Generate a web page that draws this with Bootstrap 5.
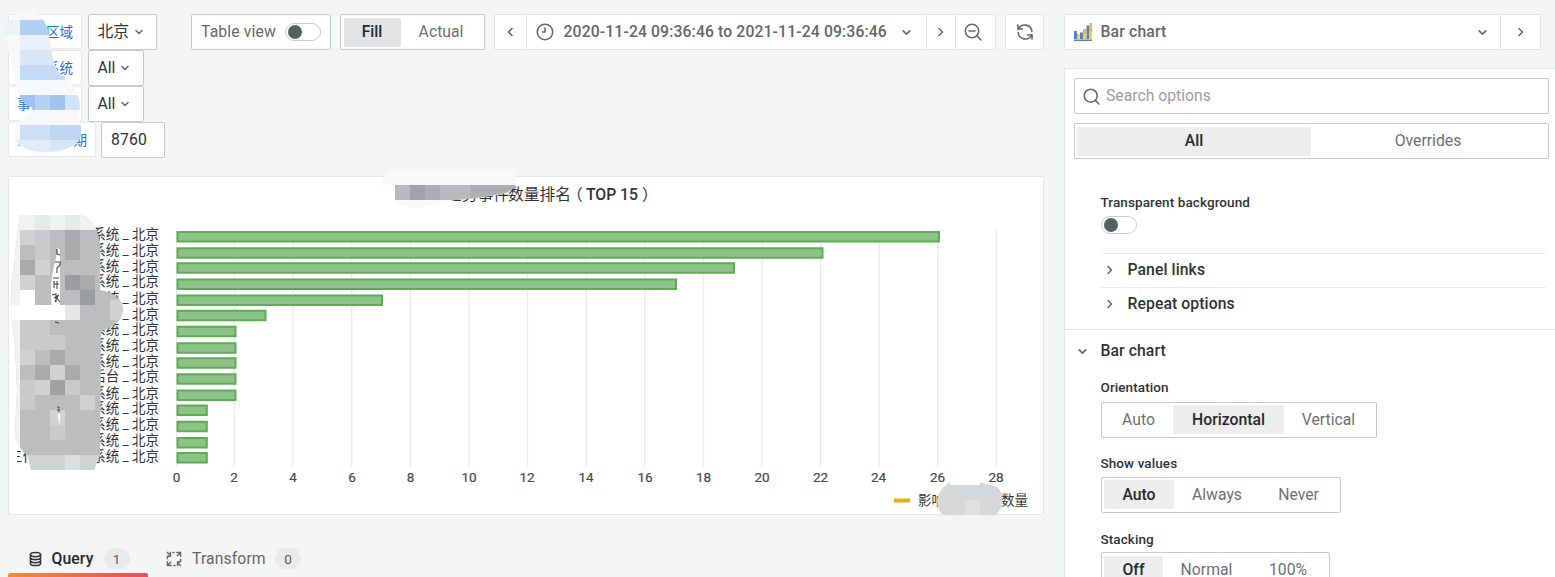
<!DOCTYPE html>
<html lang="en">
<head>
<meta charset="utf-8">
<title>Edit panel</title>
<meta name="viewport" content="width=device-width, initial-scale=1">
<link href="https://cdn.jsdelivr.net/npm/bootstrap@5.3.0/dist/css/bootstrap.min.css" rel="stylesheet">
<style>
body{background:#f4f5f5;color:#2f3338;font-family:Roboto,"Noto Sans CJK SC",sans-serif;font-size:15.75px;line-height:24px;height:577px;overflow:hidden}
svg{display:block;flex:none}
.ico{fill:none;stroke:#66696d;stroke-width:1.6;stroke-linecap:round;stroke-linejoin:round}
.left-col{width:1064px;height:577px;padding:14px 0 0 8px}
.right-col{width:491px;height:577px;padding-top:14px}
.vars{width:183px;position:relative}
.var-row{height:36px}
.var-label{height:35px;width:74px;border:1px solid #e6e7e8;border-radius:2px;background:#fff;color:#1f6fe0;font-size:13.5px;padding-right:8px}
.var-label.wide{width:88px}
.box{height:36px;background:#fff;border:1.5px solid #c6c8ca;border-radius:2px}
.vars .box{padding-left:9px}
.soft{height:36px;background:#fff;border:1px solid #e2e4e5;border-radius:2px}
.soft>*+*{border-left:1px solid #e2e4e5}
.muted{color:#63676b}
.toggle{width:36px;height:18px;border:1.3px solid #c9cbcd;border-radius:10px;background:#fff;padding:0 0 0 2.5px}
.toggle i{width:14px;height:14px;border-radius:50%;background:#5a5e62}
.seg{height:36px;padding:2.5px;background:#fff;border:1.5px solid #c6c8ca;border-radius:2px}
.seg span{height:29px;display:flex;align-items:center;justify-content:center;color:#6c7074;border-radius:2px}
.seg .on{background:#ededee;color:#25292e;font-weight:500}
.med{font-weight:500}
.range{letter-spacing:.12px;margin-left:10px;width:324px;white-space:nowrap}
.panel{width:1036px;height:339px;margin-top:17.5px;background:#fff;border:1px solid #e4e6e7;border-radius:2px}
.side{height:520px;margin-top:18px;background:#fff;border:1px solid #e4e6e7;border-right:0;padding:9px 6px 0 8.5px}
.search{width:475px;color:#9b9ea1}
.indent{padding-left:27px;margin-right:-6px}
.flabel{font-size:13.5px;font-weight:500;line-height:18px;letter-spacing:.09px}
.sub{border-top:1.5px solid #e9eaeb;height:34px;width:445px;padding-left:4px;letter-spacing:.08px}
.cat{border-top:1.3px solid #e2e4e5;margin:9px -6px 0 -8.5px;height:43px;padding-left:12px}
.pill{background:#e9eaeb;border-radius:12px;height:21px;width:26px;font-size:13.5px;color:#55595d}
.tab{height:37px;position:relative}
.tab.on::after{content:"";position:absolute;left:0;right:0;bottom:0;height:4px;border-radius:2px 2px 0 0;background:linear-gradient(90deg,#f98b2f,#f2495c)}
.cover{position:absolute;pointer-events:none}
</style>
</head>
<body>
<svg width="0" height="0" class="position-absolute"><defs>
<symbol id="dn" viewBox="0 0 10 10"><path d="M2 3.5 5 6.5 8 3.5"/></symbol>
<symbol id="rt" viewBox="0 0 10 12"><path d="M3 2.5 6.5 6 3 9.5"/></symbol>
</defs></svg>
<div class="d-flex">
<main class="left-col">
  <div class="d-flex align-items-start">
    <div class="vars">
      <div class="var-row d-flex"><div class="var-label d-flex align-items-center justify-content-end">区域</div><div class="box d-flex align-items-center" style="width:69.5px;margin-left:5.5px">北京<svg class="ico" style="margin-left:5px" width="10" height="10"><use href="#dn"/></svg></div></div>
      <div class="var-row d-flex"><div class="var-label d-flex align-items-center justify-content-end">系统</div><div class="box d-flex align-items-center" style="width:56px;margin-left:5.5px">All<svg class="ico" style="margin-left:5px" width="10" height="10"><use href="#dn"/></svg></div></div>
      <div class="var-row d-flex"><div class="var-label d-flex align-items-center ps-2">事件</div><div class="box d-flex align-items-center" style="width:56px;margin-left:5.5px">All<svg class="ico" style="margin-left:5px" width="10" height="10"><use href="#dn"/></svg></div></div>
      <div class="var-row d-flex"><div class="var-label wide d-flex align-items-center justify-content-between ps-2"><span>人</span><span>期</span></div><div class="box d-flex align-items-center" style="width:64px;margin-left:5px;letter-spacing:.15px">8760</div></div>
      <svg class="cover" style="left:-3px;top:-5px" width="80" height="150" viewBox="5 9 80 150">
        <clipPath id="c1"><path d="M5 34Q8 12 25 11Q42 10 47 28L52 52Q54 70 62 75Q80 87 80 109L77 113Q84 130 79 140Q70 152 46 152Q24 152 17 142Q11 130 20 119Q30 112 35 109Q18 102 16 84Z"/></clipPath>
        <g clip-path="url(#c1)" shape-rendering="crispEdges">
          <path fill="#f7f8f9" d="M0 0h90v160H0z"/><path fill="#edf1f8" d="M5 20h15v15H5z"/><path fill="#b1cff3" d="M20 20h30v15H20z"/>
          <path fill="#e9f0fa" d="M20 35h35v15H20z"/><path fill="#dae6f6" d="M20 50h40v15H20z"/><path fill="#c5daf4" d="M20 65h45v15H20z"/>
          <path fill="#9fc2ef" d="M20 95h15v15H20z"/><path fill="#b4d0f3" d="M35 95h15v15H35z"/><path fill="#9fc4f0" d="M50 95h15v15H50z"/><path fill="#d2e3f8" d="M65 95h20v15H65z"/>
          <path fill="#ccdff6" d="M20 125h30v15H20z"/><path fill="#bed6f4" d="M50 125h35v15H50z"/><path fill="#e1ebf9" d="M15 140h35v15H15z"/><path fill="#d6e5f8" d="M50 140h35v15H50z"/>
        </g>
      </svg>
    </div>
    <div class="box d-flex align-items-center muted" style="width:140px;padding-left:9px"><span style="letter-spacing:.12px">Table view</span><div class="toggle d-flex align-items-center" style="margin-left:9px"><i></i></div></div>
    <div class="seg d-flex" style="width:145px;margin-left:9px"><span class="on" style="width:57px;background:#e2e3e5">Fill</span><span class="flex-fill">Actual</span></div>
    <div class="soft d-flex muted med" style="width:502px;margin-left:9px">
      <div class="d-flex align-items-center justify-content-center" style="width:30.5px"><svg class="ico" width="10" height="12" viewBox="0 0 10 12"><path d="M7 2.5 3.5 6 7 9.5"/></svg></div>
      <div class="d-flex align-items-center" style="width:400px;padding-left:9px"><svg class="ico" width="18" height="18" viewBox="0 0 18 18"><circle cx="9" cy="9" r="7.7"/><path d="M9 5v4H6.5"/></svg><span class="range">2020-11-24 09:36:46 to 2021-11-24 09:36:46</span><svg class="ico" style="margin-left:13px" width="11" height="11"><use href="#dn"/></svg></div>
      <div class="d-flex align-items-center justify-content-center" style="width:29px"><svg class="ico" width="10" height="12"><use href="#rt"/></svg></div>
      <div class="d-flex align-items-center justify-content-center flex-fill pe-1"><svg class="ico" width="18" height="18" viewBox="0 0 18 18"><circle cx="8" cy="8" r="6.7"/><path d="M5 8h6M13 13l4 4"/></svg></div>
    </div>
    <div class="soft d-flex align-items-center justify-content-center" style="width:39px;margin-left:9px"><svg class="ico" width="18" height="18" viewBox="0 0 18 18"><path d="M2 6.5V2M2 6h4.5M2.5 6A7 7 0 0 1 15.8 8.5M16 16v-4.5M16 12h-4.5M15.5 12A7 7 0 0 1 2.2 9.5"/></svg></div>
  </div>
  <section class="panel">
    <svg width="1034" height="337" viewBox="9 177 1034 337" style="overflow:visible">
      <path stroke="#ebecec" stroke-width="1.4" d="M176.5 230v237M234.5 230v237M293.2 230v237M351.8 230v237M410.4 230v237M469 230v237M527.5 230v237M586.2 230v237M644.8 230v237M703.4 230v237M762 230v237M820.6 230v237M879.2 230v237M937.8 230v237M996.5 230v237"/>
      <g fill="#8ec388" stroke="#5fab55" stroke-width="2">
        <path d="M177.5 232h761.5v9.5h-761.5zM177.5 248.2h645v9.5h-645zM177.5 263.2h556.5v9.5h-556.5zM177.5 279.5h498.5v9.5h-498.5zM177.5 295.5h204.5v9.5h-204.5zM177.5 310.8h88v9.5h-88z"/>
        <path d="M177.5 326.8h58v9.5h-58zM177.5 343.2h58v9.5h-58zM177.5 358.2h58v9.5h-58zM177.5 374.2h58v9.5h-58zM177.5 390.5h58v9.5h-58z"/>
        <path d="M177.5 405.5h29.3v9.5h-29.3zM177.5 421.8h29.3v9.5h-29.3zM177.5 438h29.3v9.5h-29.3zM177.5 453h29.3v9.5h-29.3z"/>
      </g>
      <g font-size="13.5" fill="#2f3338" text-anchor="end">
        <text x="159" y="238.7">系统 _ 北京</text><text x="159" y="255">系统 _ 北京</text><text x="159" y="271">系统 _ 北京</text><text x="159" y="286.3">系统 _ 北京</text><text x="159" y="302.5">系统 _ 北京</text><text x="159" y="318.5">系统 _ 北京</text><text x="159" y="333.5">系统 _ 北京</text><text x="159" y="349.7">系统 _ 北京</text><text x="159" y="366">系统 _ 北京</text><text x="159" y="381">后台 _ 北京</text><text x="159" y="397.5">系统 _ 北京</text><text x="159" y="413">系统 _ 北京</text><text x="159" y="428.5">系统 _ 北京</text><text x="159" y="444.5">系统 _ 北京</text><text x="159" y="461">系统 _ 北京</text>
      </g>
      <clipPath id="c3"><path d="M17 448h14v16H17z"/></clipPath>
      <text clip-path="url(#c3)" font-size="13.5" fill="#2f3338" x="9" y="461">三付</text>
      <g font-size="13.5" fill="#45494d" stroke="#45494d" stroke-width=".2" text-anchor="middle">
        <text x="176.5" y="482.3">0</text><text x="234" y="482.3">2</text><text x="293" y="482.3">4</text><text x="352" y="482.3">6</text><text x="410.5" y="482.3">8</text><text x="469" y="482.3">10</text><text x="527" y="482.3">12</text><text x="586" y="482.3">14</text><text x="645" y="482.3">16</text><text x="703.5" y="482.3">18</text><text x="762" y="482.3">20</text><text x="820.5" y="482.3">22</text><text x="878.5" y="482.3">24</text><text x="937.5" y="482.3">26</text><text x="996" y="482.3">28</text>
      </g>
      <g font-size="15.75" fill="#2f3338"><text x="446" y="200">业务事件</text><text x="508" y="200">数量排名</text><text x="567" y="200">（</text><text x="586" y="200" font-weight="500" textLength="52">TOP 15</text><text x="642" y="200">）</text></g>
      <path fill="#e0b400" d="M894 498.5h16v4h-16z"/>
      <g font-size="13.5" fill="#2f3338"><text x="918" y="504.5">影响</text><text x="1001" y="504.5">数量</text></g>
      <!-- redacted title -->
      <path fill="#f8f9f9" d="M380 185Q385 170 400 170H516V185zM395 200h60Q430 207 415 208Q395 207 395 200z"/>
      <path fill="#b9babc" d="M395 185h121q-3 5-10 8-20 5-50 7H395z"/><path fill="#a2a3a6" d="M410 185h15v15h-15z"/><path fill="#adaeb0" d="M425 185h15v15h-15zM470 185h45q-4 5-12 8l-33 5z"/>
      <!-- redacted legend -->
      <path fill="#f3f5f5" d="M944 515h54q-8 8-27 8t-27-8z"/>
      <path fill="#d6d7d8" d="M950 482v3h30v-3l17 5q6 6 5 14 0 8-6 14h-53q-6-6-6-14 0-10 13-19z"/><path fill="#dfe0e1" d="M965 500h15v15h-15z"/>
      <!-- redacted category names -->
      <clipPath id="c2"><path d="M20 215H55L65 215H82Q98 223 100 245V290Q123 294 123 311Q121 325 101 331L100 455L94 470H31L28 456Q18 449 15 435L17 390 15 345 11 310Q10 285 15 258Q17 232 20 215z"/></clipPath>
      <g clip-path="url(#c2)" shape-rendering="crispEdges">
        <path fill="#bcbdbf" d="M0 200h130v280H0z"/>
        <path fill="#f1f2f2" d="M10 215h10v240H10zM20 215h80v15H20z"/>
        <path fill="#e8e9e9" d="M35 215h15v15H35zM65 215h15v15H65z"/>
        <path fill="#d0d1d3" d="M20 230h15v15H20zM35 260h15v15H35zM20 275h15v15H20zM110 300h13v20h-13zM20 325h15v40H20zM50 365h15v15H50zM35 380h15v15H35zM80 395h15v15H80z"/>
        <path fill="#c8cacb" d="M35 230h15v30H35zM20 320h30v30H20zM35 335h30v15H35zM65 380h15v15H65zM20 380h15v30H20zM50 425h15v15H50z"/>
        <path fill="#a9aaac" d="M65 230h15v30H65zM20 260h15v15H20zM80 275h15v15H80zM50 350h15v15H50zM35 365h15v15H35zM65 365h15v15H65z"/>
        <path fill="#9fa1a3" d="M50 380h15v15H50z"/><path fill="#999da1" d="M65 275h15v15H65zM80 290h15v15H80z"/>
        <path fill="#fff" d="M20 290h15v15h30v15H11v-15h9z"/><path fill="#e5e8e8" d="M65 305h15v15H65z"/>
        <path fill="#d0d2d3" d="M50 410h15v15H50zM28 455h72v15H28z"/><path fill="#dddedf" d="M65 455h15v15H65z"/>
      </g>
      <path fill="#fff" d="M58 248l2 2v57h-8q-2-14 0-31zM58 406h2v18l-2-6z"/>
      <path fill="none" stroke="#44484c" stroke-width="1.1" d="M57 249v5l3 1M55 262h5v3l-3 3v5M53 278h6m-5 3v7m0-4h5m-2-3v8M52 295l4-1v8m-2-4 5-3m-1 1-3 6m1-5 4 5M57 407h3m-1 0v6m-2-3h3M55 322l4 1"/>
    </svg>
  </section>
  <nav class="d-flex" style="margin-top:25.5px;margin-left:-.5px">
    <div class="tab on d-flex align-items-center" style="width:140px;padding-left:20px;color:#25292e"><svg class="ico" style="stroke:#33373b;stroke-width:1.7" width="15" height="16" viewBox="0 0 15 18"><ellipse cx="7.5" cy="4" rx="5.7" ry="2.4"/><path d="M1.8 4v10c0 1.4 2.6 2.4 5.7 2.4s5.7-1 5.7-2.4V4M1.8 7.3c0 1.4 2.6 2.4 5.7 2.4s5.7-1 5.7-2.4M1.8 10.7c0 1.4 2.6 2.4 5.7 2.4s5.7-1 5.7-2.4"/></svg><span class="med" style="margin-left:9px;width:43px;letter-spacing:.1px">Query</span><span class="pill d-flex align-items-center justify-content-center" style="margin-left:9px">1</span></div>
    <div class="tab d-flex align-items-center muted" style="padding-left:18px"><svg class="ico" style="stroke-width:1.6" width="16" height="16" viewBox="0 0 17 17"><path d="M1.5 5.5h3.2v-4M4.5 4.5 1.5 1.5M1.5 5.5v2.5M7.5 1.5h1M11.5 1.5h4v4M15.5 1.5l-3.5 3.5M1.5 11.5v4h4M1.5 15.5 5 12M12.3 15.5v-4h3.2M12.5 12.5l3 3M15.5 9v2.5M8.5 15.5h1"/></svg><span style="margin-left:10.5px;width:74px;letter-spacing:.1px">Transform</span><span class="pill d-flex align-items-center justify-content-center" style="margin-left:9px">0</span></div>
  </nav>
</main>
<aside class="right-col">
  <div class="soft d-flex muted med" style="width:477px">
    <div class="d-flex align-items-center" style="width:435px;padding-left:9px"><svg width="18" height="18" viewBox="0 0 18 18"><path fill="#5580c3" d="M0 8h3v8H0zM6 9.5h3V16H6zM12.5 2.5h3V16h-3zM0 16.5h18V18H0z"/><path fill="#f9b13c" d="M3 11h2.5v5H3zM9 6h3v10H9zM15.5 0H18v16h-2.5z"/><path fill="#fcd12a" d="M3 13h2.5v3H3zM9 11h3v5H9zM15.5 9H18v7h-2.5z"/></svg><span class="flex-fill" style="margin-left:8.5px;letter-spacing:.15px">Bar chart</span><svg class="ico" style="margin-right:12px" width="11" height="11"><use href="#dn"/></svg></div>
    <div class="d-flex align-items-center justify-content-center flex-fill"><svg class="ico" width="10" height="12"><use href="#rt"/></svg></div>
  </div>
  <div class="side">
    <div class="box search d-flex align-items-center" style="padding-left:8.5px"><svg class="ico" width="17" height="17" viewBox="0 0 17 17"><circle cx="7.7" cy="7.7" r="6.5"/><path d="M12.5 12.5l3.5 3.5"/></svg><span style="margin-left:6px">Search options</span></div>
    <div class="seg d-flex" style="width:475px;margin-top:9px"><span class="on w-50">All</span><span class="w-50">Overrides</span></div>
    <div class="indent" style="padding-top:34px">
      <div class="flabel">Transparent background</div>
      <div class="toggle d-flex align-items-center" style="margin:4.5px 0 19px"><i></i></div>
      <div class="sub d-flex align-items-center med"><svg class="ico" width="10" height="12"><use href="#rt"/></svg><span style="margin-left:13px">Panel links</span></div>
      <div class="sub d-flex align-items-center med"><svg class="ico" width="10" height="12"><use href="#rt"/></svg><span style="margin-left:13px">Repeat options</span></div>
    </div>
    <div class="cat d-flex align-items-center med" style="margin-top:8.5px"><svg class="ico" width="11" height="11"><use href="#dn"/></svg><span style="margin-left:12.5px;letter-spacing:.08px">Bar chart</span></div>
    <div class="indent" style="padding-top:6px">
      <div class="flabel">Orientation</div>
      <div class="seg d-flex" style="width:276px;margin:5.5px 0 16px"><span style="width:69px">Auto</span><span class="on" style="width:111px">Horizontal</span><span class="flex-fill">Vertical</span></div>
      <div class="flabel">Show values</div>
      <div class="seg d-flex" style="width:240px;margin:5px 0 17px"><span class="on" style="width:70px">Auto</span><span style="width:86px">Always</span><span class="flex-fill">Never</span></div>
      <div class="flabel">Stacking</div>
      <div class="seg d-flex" style="width:229px;margin-top:4.5px"><span class="on" style="width:59px">Off</span><span style="width:87px">Normal</span><span class="flex-fill">100%</span></div>
    </div>
  </div>
</aside>
</div>
<script src="https://cdn.jsdelivr.net/npm/bootstrap@5.3.0/dist/js/bootstrap.bundle.min.js"></script>
</body>
</html>
